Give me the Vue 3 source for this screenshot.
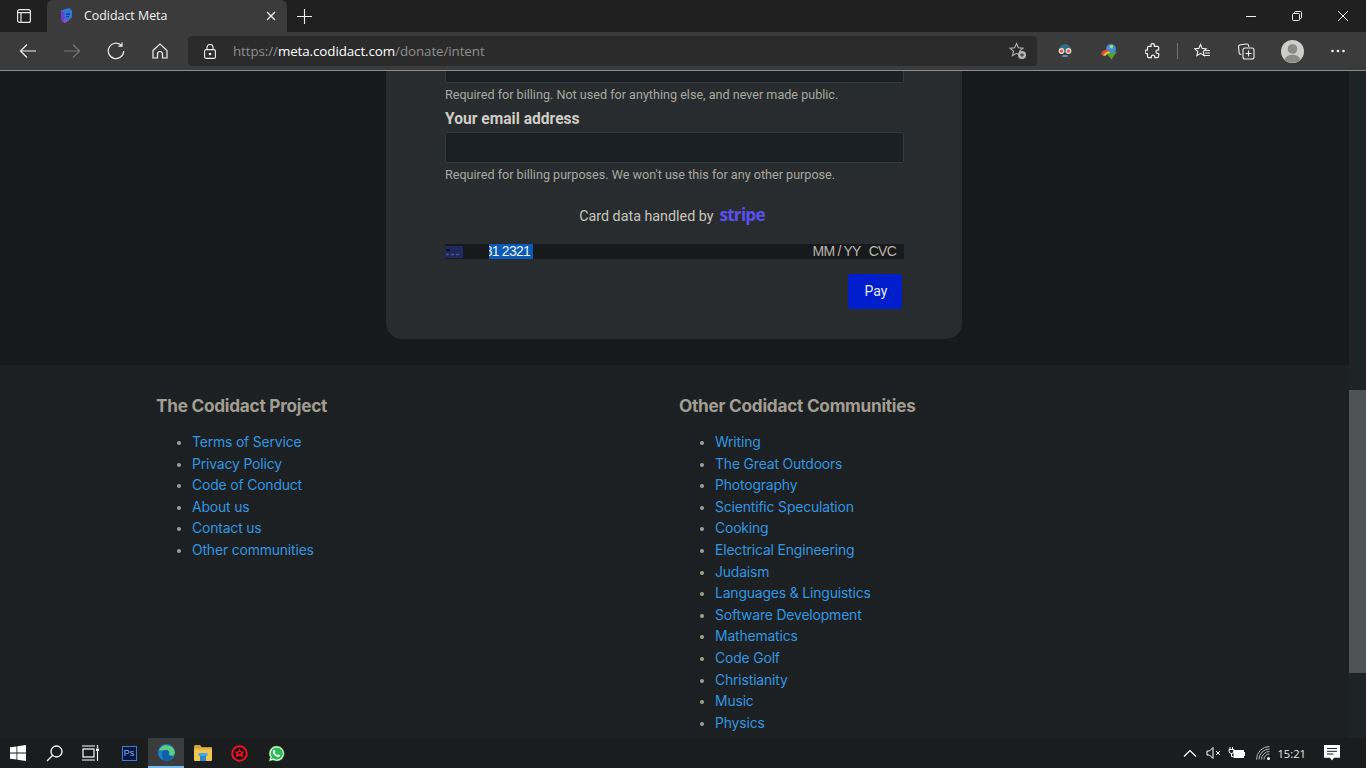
<script setup>
const col1 = ['Terms of Service','Privacy Policy','Code of Conduct','About us','Contact us','Other communities']
const col2 = ['Writing','The Great Outdoors','Photography','Scientific Speculation','Cooking','Electrical Engineering','Judaism','Languages & Linguistics','Software Development','Mathematics','Code Golf','Christianity','Music','Physics']
</script>

<template>
  <div class="screen">
    <header class="titlebar">
      <div class="panel-btn">
        <svg width="16" height="16" viewBox="0 0 16 16" fill="none" stroke="#e8e8e8" stroke-width="1.2"><rect x="1.6" y="1.6" width="12.8" height="12.8" rx="2"/><path d="M1.6 4.6h12.8M5 4.6v9.8"/></svg>
      </div>
      <div class="tab">
        <svg class="fav" width="14" height="16" viewBox="0 0 14 16"><path d="M1 2.500L9 0l3 2.500v7L5 15 2 13z" fill="#2f78d8"/><path d="M1 2.500l3.500 2v10.200L1.500 12z" fill="#6a3fd0"/><path d="M2 13l3 2 4-2.500-1-1z" fill="#9a45d8"/><path d="M6 5.500h4V7H6zM6 8h3v1.300H6z" fill="#163a88"/></svg>
        <span class="tab-title">Codidact Meta</span>
        <svg class="tab-x" width="10" height="10" viewBox="0 0 10 10" stroke="#f0f0f0" stroke-width="1.300"><path d="M1 1l8 8M9 1l-8 8"/></svg>
      </div>
      <div class="new-tab">
        <svg width="15" height="15" viewBox="0 0 15 15" stroke="#efefef" stroke-width="1.100"><path d="M7.500 0v15M0 7.500h15"/></svg>
      </div>
      <div class="winctl">
        <div class="wbtn"><svg width="10" height="10" viewBox="0 0 10 10" stroke="#eee"><path d="M0 5.500h10"/></svg></div>
        <div class="wbtn"><svg width="10" height="10" viewBox="0 0 10 10" fill="none" stroke="#eee"><rect x=".5" y="2.500" width="7" height="7" rx="1"/><path d="M2.500 2.500V1.500a1 1 0 0 1 1-1h5a1 1 0 0 1 1 1v5a1 1 0 0 1-1 1h-1"/></svg></div>
        <div class="wbtn"><svg width="10" height="10" viewBox="0 0 10 10" stroke="#eee"><path d="M0 0l10 10M10 0L0 10"/></svg></div>
      </div>
    </header>

    <nav class="toolbar">
      <div class="tb"><svg width="18" height="16" viewBox="0 0 18 16" fill="none" stroke="#efefef" stroke-width="1.200"><path d="M17 8H1.500M8 1.500L1.500 8 8 14.500"/></svg></div>
      <div class="tb"><svg width="18" height="16" viewBox="0 0 18 16" fill="none" stroke="#777" stroke-width="1.200"><path d="M1 8h15.500M10 1.500L16.500 8 10 14.500"/></svg></div>
      <div class="tb"><svg width="18" height="18" viewBox="0 0 18 18" fill="none" stroke="#efefef" stroke-width="1.200"><path d="M14.500 3.500A7.700 7.700 0 1 0 16.700 9M15 .5v3.600h-3.600"/></svg></div>
      <div class="tb"><svg width="16" height="16" viewBox="0 0 16 16" fill="none" stroke="#efefef" stroke-width="1.200"><path d="M1 7.500L8 1l7 6.500v7.500h-4.500v-4a2.500 2.500 0 0 0-5 0v4H1z"/></svg></div>
      <div class="address">
        <svg class="lock" width="12" height="15" viewBox="0 0 12 15" fill="none" stroke="#efefef" stroke-width="1.100"><rect x=".6" y="5.600" width="10.800" height="8.800" rx="1.500"/><path d="M3 5.600V3.500a3 3 0 0 1 6 0v2.100"/><circle cx="6" cy="10" r=".8" fill="#efefef"/></svg>
        <span class="url"><span class="dim">https://</span><span class="host">meta.codidact.com</span><span class="dim">/donate/intent</span></span>
        <svg class="fav-add" width="18" height="18" viewBox="0 0 18 18"><path d="M7.500 1.500l1.900 4.300 4.600.4-3.500 3 1 4.500-4-2.400-4 2.400 1-4.500L1 6.200l4.600-.4z" fill="none" stroke="#b5b5b5" stroke-width="1.100"/><circle cx="13" cy="13" r="4" fill="#b5b5b5"/><path d="M11 13h4M13 11v4" stroke="#333" stroke-width="1"/></svg>
      </div>
      <div class="tb ext">
        <svg width="16" height="16" viewBox="0 0 16 16"><path d="M2 7a6 6 0 0 1 12 0v3H2z" fill="#2f6f80"/><path d="M3 11h10l-1 4.500H4z" fill="#33454c"/><circle cx="4.500" cy="8" r="2.900" fill="#e6d8d2"/><circle cx="11.500" cy="8" r="2.900" fill="#e6d8d2"/><circle cx="4.500" cy="8" r="1.600" fill="#e0503c"/><circle cx="11.500" cy="8" r="1.600" fill="#e0503c"/><path d="M5.500 13h5" stroke="#c9c9c9"/></svg>
      </div>
      <div class="tb ext">
        <svg width="17" height="17" viewBox="0 0 17 17"><circle cx="10" cy="6" r="5" fill="#3f8fd8"/><path d="M8 3.500a3 3 0 0 1 4.500-.5l-1.500 3z" fill="#b5dc5c"/><path d="M0 11c1-3.500 4-5 7-4l1.500 1.500C6 8 3.500 9 1.800 12.500z" fill="#e2462f"/><path d="M1.800 12.500C3.500 9 6 8 8.500 8.500l1 2.500c-2-.5-4 0-5 2z" fill="#e8b93a"/><path d="M6 11l10-2.500-5.500 8z" fill="#4fa22d"/></svg>
      </div>
      <div class="tb ext">
        <svg width="16" height="16" viewBox="0 0 16 16" fill="none" stroke="#efefef" stroke-width="1.200"><path d="M6 1.500c.3-1.300 3-1.300 3.300 0 .1.600 0 1.300.1 1.800h3a1.300 1.300 0 0 1 1.300 1.300V7c-.6.100-1.200 0-1.700.1-1.300.3-1.300 3 0 3.300.5.100 1.100 0 1.700.100v2.400a1.800 1.800 0 0 1-1.800 1.800H9.700c0-.6.100-1.100 0-1.600-.3-1.400-3-1.400-3.300 0-.1.500 0 1 0 1.600H4a1.500 1.500 0 0 1-1.500-1.500v-2.700c-.5 0-1 .1-1.400 0-1.400-.4-1.400-3 0-3.300.4-.1.900 0 1.400 0V4.600a1.300 1.300 0 0 1 1.300-1.300h2.300c0-.6-.2-1.200-.1-1.800z"/></svg>
      </div>
      <div class="sep"></div>
      <div class="tb">
        <svg width="17" height="17" viewBox="0 0 17 17" fill="none" stroke="#efefef" stroke-width="1.100"><path d="M6.500 1.500l1.700 3.900 4 .4-3 2.700.9 4.100-3.600-2.200L2.900 12.600l.9-4.100-3-2.700 4-.4zM11 7.500h5M10.800 10h5.200M9.800 12.500h6.200"/></svg>
      </div>
      <div class="tb">
        <svg width="17" height="17" viewBox="0 0 17 17" fill="none" stroke="#efefef" stroke-width="1.100"><path d="M3.500 11.500H3A2 2 0 0 1 1.100 9.800L.6 4A2 2 0 0 1 2.400 1.700L8.500 1a2 2 0 0 1 2.200 1.600l.2 1.400"/><rect x="5" y="5" width="11" height="11" rx="2"/><path d="M10.500 7.500v6M7.500 10.500h6"/></svg>
      </div>
      <div class="tb avatar-wrap">
        <div class="avatar">
          <svg width="23" height="23" viewBox="0 0 23 23"><circle cx="11.500" cy="11.500" r="11.500" fill="#cdcdc9"/><circle cx="11.500" cy="9" r="4.800" fill="#8a8a86"/><path d="M3.500 19.500c1.500-3.500 4.500-4.800 8-4.800s6.500 1.300 8 4.800a11.500 11.500 0 0 1-16 0z" fill="#8a8a86"/></svg>
        </div>
      </div>
      <div class="tb">
        <svg width="14" height="4" viewBox="0 0 14 4" fill="#efefef"><circle cx="1.500" cy="2" r="1.300"/><circle cx="7" cy="2" r="1.300"/><circle cx="12.500" cy="2" r="1.300"/></svg>
      </div>
    </nav>

    <div class="viewport">
      <div class="page">
        <main class="main">
          <section class="card">
            <div class="input short"></div>
            <p class="help first">Required for billing. Not used for anything else, and never made public.</p>
            <label class="label">Your email address</label>
            <div class="input"></div>
            <p class="help">Required for billing purposes. We won't use this for any other purpose.</p>
            <div class="handled">
              <span>Card data handled by</span>
              <span class="stripe">stripe</span>
            </div>
            <div class="cardrow">
              <span class="cc">
                <svg width="18" height="12" viewBox="0 0 18 12"><rect width="18" height="12" fill="#1f2a5c"/><rect x="1" y="3" width="4" height="2.500" fill="#10152e"/><path d="M1 8.500h3M6 8.500h3M11 8.500h3" stroke="#45538f" stroke-width="1.300"/></svg>
              </span>
              <span class="sel"><span class="sel-text">81 2321</span></span>
              <span class="exp">MM / YY</span>
              <span class="cvc">CVC</span>
            </div>
            <div class="actions"><button class="pay">Pay</button></div>
          </section>
        </main>
        <footer class="footer">
          <div class="fcol">
            <h3>The Codidact Project</h3>
            <ul><li v-for="t in col1" :key="t"><a>{{ t }}</a></li></ul>
          </div>
          <div class="fcol">
            <h3>Other Codidact Communities</h3>
            <ul><li v-for="t in col2" :key="t"><a>{{ t }}</a></li></ul>
          </div>
        </footer>
      </div>
      <div class="scrollbar"><div class="thumb"></div></div>
    </div>

    <div class="taskbar">
      <div class="tk"><svg width="16" height="16" viewBox="0 0 16 16" fill="#fff"><path d="M0 2.300l6.500-.9v6.200H0zM7.300 1.300L16 0v7.600H7.300zM0 8.400h6.500v6.200L0 13.700zM7.300 8.400H16V16l-8.700-1.300z"/></svg></div>
      <div class="tk"><svg width="17" height="17" viewBox="0 0 17 17" fill="none" stroke="#fff" stroke-width="1.300"><circle cx="10.500" cy="6.500" r="5.500"/><path d="M6.500 10.500L1 16"/></svg></div>
      <div class="tk"><svg width="17" height="16" viewBox="0 0 17 16" fill="none" stroke="#fff" stroke-width="1.200"><rect x="1" y="4" width="11" height="8"/><path d="M0 1h13M0 15h13M15.500 0v3M15.500 6v10"/><rect x="14" y="3.500" width="3" height="2.500" fill="#fff" stroke="none"/></svg></div>
      <div class="tk ps-slot"><div class="ps">Ps</div></div>
      <div class="tk edge">
        <svg width="17" height="17" viewBox="0 0 17 17"><circle cx="8.500" cy="8.500" r="8.500" fill="#1a7fc9"/><path d="M1 6a8.500 8.500 0 0 1 16 2.500c0 2-1.500 3-3.300 3-1.500 0-2.700-.7-2.700-1.500 1-1.500 0-4-3-4-3 0-6 1-7 0z" fill="#5ecb7d"/><path d="M4 9c0-2 2-3 4-3s3 1.500 2.500 3.500c-.5 2 2 3.500 4.500 2.500-1.500 3-4 5-7 5C5 17 4 12 4 9z" fill="#0f5ea8"/></svg>
      </div>
      <div class="tk">
        <svg width="18" height="16" viewBox="0 0 18 16"><path d="M0 1.500A1.500 1.500 0 0 1 1.500 0h4.500l2 2.500H0z" fill="#d9a23a"/><rect y="2.500" width="18" height="13.500" rx="1" fill="#f2c94e"/><rect x="0" y="2.500" width="18" height="2.500" fill="#e7b23f"/><rect x="6" y="9" width="6" height="7" fill="#2f86c9"/><rect x="4.500" y="8" width="9" height="3" fill="#4aa6e0"/></svg>
      </div>
      <div class="tk">
        <svg width="17" height="17" viewBox="0 0 17 17"><circle cx="8.500" cy="8.500" r="7.300" fill="#260608" stroke="#e5182a" stroke-width="2"/><path d="M8.500 3.500l1.500 2.800 3 .4-1.500 2.500 1 2.800-4-1-4 1 1-2.800L4 6.700l3-.4z" fill="#e5182a"/><circle cx="8.500" cy="8" r="1.300" fill="#260608"/></svg>
      </div>
      <div class="tk">
        <svg width="17" height="17" viewBox="0 0 17 17"><path d="M8.700 1A7.500 7.500 0 0 0 2.300 12.400L1 16.200l3.900-1.200A7.500 7.500 0 1 0 8.700 1z" fill="#fff" stroke="#3a3" stroke-width=".6"/><path d="M8.700 2.400a6.100 6.100 0 0 0-5 9.500l-.8 2.300 2.400-.7a6.100 6.100 0 1 0 3.400-11.100z" fill="#2dbb54"/><path d="M6.200 5c.6-.3.900 1 1.200 1.700.1.500-.6.900-.5 1.200.5 1 1.300 1.700 2.400 2.200.4.100.7-.7 1.100-.7.700.3 1.700.7 1.700 1.100 0 1-1.200 1.600-2.200 1.400-2.400-.5-4.500-2.400-5-4.700C4.700 6 5.300 5.100 6.200 5z" fill="#fff"/></svg>
      </div>
      <div class="tray">
        <svg class="t-up" width="14" height="8" viewBox="0 0 14 8" fill="none" stroke="#fff" stroke-width="1.200"><path d="M1 7.500l6-6 6 6"/></svg>
        <svg class="t-vol" width="15" height="14" viewBox="0 0 15 14" fill="none" stroke="#fff" stroke-width="1"><path d="M1 5h2.500L7 1.500v11L3.500 9H1zM10 5l4 4M14 5l-4 4"/></svg>
        <svg class="t-bat" width="17" height="12" viewBox="0 0 17 12"><path d="M2 0v2.500M4.500 0v2.500M1 2.500h5v1.500a2.500 2.500 0 0 1-5 0zM3.500 6v3.500h2" fill="none" stroke="#fff"/><rect x="5.500" y="3" width="10.500" height="8" fill="#fff"/><rect x="16" y="5" width="1" height="4" fill="#fff"/></svg>
        <svg class="t-wifi" width="15" height="14" viewBox="0 0 15 14" fill="none" stroke="#b8b8b8"><path d="M.5 13.500A13 13 0 0 1 13.500.5M3 13.500A10.500 10.500 0 0 1 13.500 3M5.500 13.500a8 8 0 0 1 8-8M8 13.500a5.500 5.500 0 0 1 5.500-5.500"/><circle cx="12.500" cy="12.500" r="1.500" fill="#fff" stroke="none"/></svg>
        <span class="clock">15:21</span>
        <svg class="t-note" width="16" height="16" viewBox="0 0 16 16"><path d="M0 0h16v12.800H10l-2 2.700-2-2.700H0z" fill="#fff"/><path d="M3 3.500h10M3 6.300h10M3 9h6.500" stroke="#1a1c1e"/></svg>
      </div>
    </div>
  </div>
</template>

<style scoped>
.screen { width: 1366px; height: 768px; display: flex; flex-direction: column; overflow: hidden; background: #18191b; font-family: Roboto, sans-serif; }

.titlebar { height: 32px; flex: none; display: flex; background: #202020; }
.panel-btn { width: 47px; display: flex; align-items: center; justify-content: center; }
.tab { width: 240px; background: #3b3b3b; border-radius: 6px 6px 0 0; display: flex; align-items: center; padding: 0 11px 0 13px; box-sizing: border-box; }
.tab-title { margin-left: 10px; margin-bottom: 2px; flex: 1; color: #f2f2f2; font: 12.4px "Open Sans", sans-serif; }
.new-tab { width: 35px; display: flex; align-items: center; justify-content: center; }
.winctl { margin-left: auto; display: flex; }
.wbtn { width: 46px; display: flex; align-items: center; justify-content: center; }

.toolbar { height: 38px; flex: none; background: #3b3b3b; display: flex; align-items: center; padding-left: 6px; box-sizing: content-box; border-bottom: 1px solid #8c8c8c; }
.tb { width: 44px; height: 30px; flex: none; display: flex; align-items: center; justify-content: center; }
.address { width: 849px; height: 30px; margin-left: 6px; margin-right: 6px; flex: none; background: #2b2b2b; border-radius: 4px; display: flex; align-items: center; box-sizing: border-box; padding: 0 10px 0 16px; }
.url { margin-left: 17px; margin-bottom: 1px; flex: 1; font: 13.4px "Open Sans", sans-serif; letter-spacing: -.1px; }
.dim { color: #8e8e8e; }
.host { color: #fff; }
.sep { width: 1px; height: 16px; background: #707070; margin: 0 2px; flex: none; }
.avatar-wrap { margin-left: 2px; margin-right: 2px; }
.avatar { width: 23px; height: 23px; }

.viewport { height: 667px; flex: none; display: flex; overflow: hidden; }
.page { width: 1349px; flex: none; }
.scrollbar { width: 17px; background: #1e2325; padding-top: 319px; box-sizing: border-box; }
.thumb { height: 283px; background: #4f5355; }

.main { height: 294px; background: #18191b; display: flex; justify-content: center; padding-right: 1px; box-sizing: border-box; }
.card { width: 576px; height: 268px; box-sizing: border-box; padding: 0 58px 0 59px; background: #282c2e; border-radius: 0 0 16px 16px; }
.input { height: 31px; box-sizing: border-box; background: #1a2023; border: 1px solid #34393b; border-radius: 2px; }
.input.short { height: 12px; border-top: 0; border-radius: 0 0 2px 2px; }
.help { margin: 3px 0 0; height: 18px; font-size: 12.6px; line-height: 18px; color: #aaa79f; }
.help.first { margin-top: 3px; }
.label { display: block; margin: 5px 0 3px; height: 20px; line-height: 20px; font-size: 15.6px; font-weight: 700; color: #d0cdc6; }
.handled { margin-top: 21px; height: 22px; display: flex; align-items: center; justify-content: center; gap: 6px; padding-right: 5px; color: #c8c5bd; font-size: 14.3px; }
.stripe { color: #5a50f0; font: 700 17.2px/22px "Open Sans", sans-serif; letter-spacing: -.8px; margin-bottom: 2px; }
.cardrow { margin-top: 17px; height: 15px; background: #18191b; display: flex; align-items: center; color: #b9b6ae; font: 14px/15px "Liberation Sans", sans-serif; letter-spacing: -.75px; }
.cc { width: 44px; height: 15px; flex: none; display: flex; align-items: center; }
.sel { width: 44px; height: 15px; flex: none; background: #0a5ab8; overflow: hidden; display: flex; justify-content: flex-end; padding-right: 3px; box-sizing: border-box; color: #f0f0f0; white-space: nowrap; }
.sel-text { flex: none; }
.exp { margin-left: auto; }
.cvc { margin-left: 8px; margin-right: 8px; }
.actions { margin-top: 15px; display: flex; justify-content: flex-end; padding-right: 2px; }
.pay { width: 54px; height: 35px; border: 0; border-radius: 3px; background: #001ecb; color: #e8e8f4; font: 14px Roboto, sans-serif; padding: 0 0 2px 2px; }

.footer { height: 373px; background: #1c2022; display: grid; grid-template-columns: 523px 1fr; padding: 30px 0 0 156px; box-sizing: border-box; overflow: hidden; }
.fcol h3 { margin: 0; height: 22px; font: 700 17.2px/22px Inter, sans-serif; letter-spacing: -.25px; color: #a29d92; }
.fcol ul { margin: 15px 0 0; padding: 0 0 0 36px; color: #a29d92; }
.fcol li { height: 21.6px; font: 13.9px/21.6px Inter, sans-serif; letter-spacing: -.15px; }
.fcol a { color: #3396e0; }

.taskbar { height: 30px; flex: none; background: #1a1c1e; display: flex; }
.tk { width: 36px; flex: none; display: flex; align-items: center; justify-content: center; box-sizing: border-box; }
.ps-slot { width: 40px; padding-left: 2px; }
.ps { width: 15px; height: 15px; box-sizing: border-box; border: 1px solid #3d7bd8; background: #0a1540; color: #7fb0f0; font: 9px/13px "Liberation Sans", sans-serif; text-align: center; }
.edge { background: #3a3c3e; border-bottom: 2px solid #76b9ed; }
.tk:nth-child(n+6) { width: 37px; }
.tray { margin-left: auto; display: flex; align-items: center; padding-right: 26px; color: #e8e8e8; }
.t-up { margin-right: 9px; }
.t-vol { margin-right: 7px; }
.t-bat { margin-right: 11px; }
.t-wifi { margin-right: 6px; }
.clock { font: 11.2px "Open Sans", sans-serif; margin-right: 18px; }
</style>
